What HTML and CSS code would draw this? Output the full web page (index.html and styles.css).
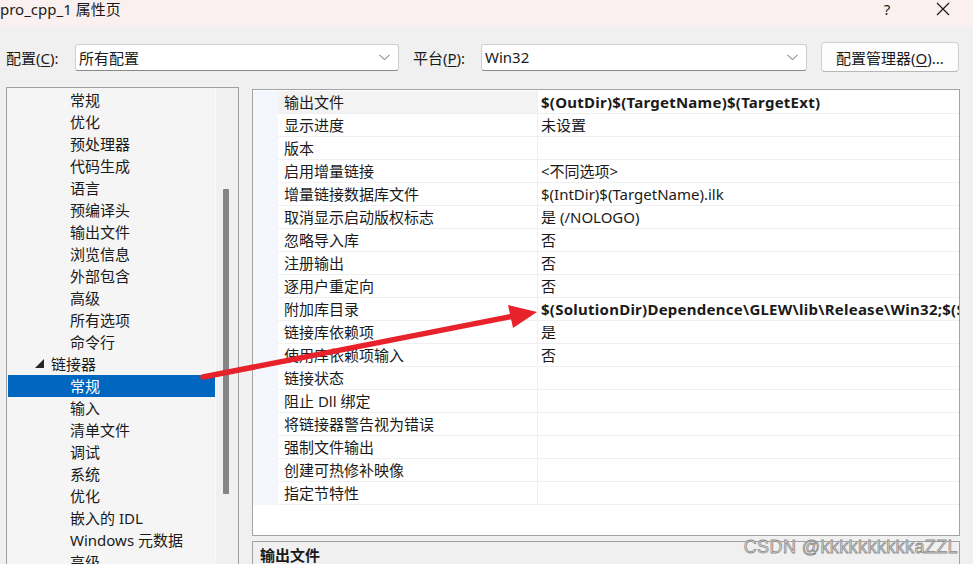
FILE: index.html
```html
<!DOCTYPE html>
<html lang="zh-CN">

<head>
    <meta charset="UTF-8">
    <meta name="viewport" content="width=device-width, initial-scale=1.0">
    <title>pro_cpp_1 属性页</title>
    <link rel="stylesheet" href="styles.css">
</head>

<body>

    <div class="titlebar">
        <span class="title">pro_cpp_1 属性页</span>
        <span class="title-btn help">?</span>
        <span class="title-btn close">
            <svg width="14" height="14" viewBox="0 0 14 14"><path d="M1 1L13 13M13 1L1 13" stroke="#1a1a1a" stroke-width="1.2"/></svg>
        </span>
    </div>

    <div class="toolbar">
        <span class="field-label">配置(<u>C</u>):</span>
        <div class="select config-select">
            <span>所有配置</span>
            <svg class="chevron" width="11" height="7" viewBox="0 0 11 7"><path d="M0.5 0.8L5.5 5.8L10.5 0.8" fill="none" stroke="#606060" stroke-width="1"/></svg>
        </div>
        <span class="field-label platform-label">平台(<u>P</u>):</span>
        <div class="select platform-select">
            <span>Win32</span>
            <svg class="chevron" width="11" height="7" viewBox="0 0 11 7"><path d="M0.5 0.8L5.5 5.8L10.5 0.8" fill="none" stroke="#606060" stroke-width="1"/></svg>
        </div>
        <button class="btn">配置管理器(<u>O</u>)...</button>
    </div>

    <div class="main">
        <div class="tree-panel">
            <div class="tree">
                <div class="tree-item">常规</div>
                <div class="tree-item">优化</div>
                <div class="tree-item">预处理器</div>
                <div class="tree-item">代码生成</div>
                <div class="tree-item">语言</div>
                <div class="tree-item">预编译头</div>
                <div class="tree-item">输出文件</div>
                <div class="tree-item">浏览信息</div>
                <div class="tree-item">外部包含</div>
                <div class="tree-item">高级</div>
                <div class="tree-item">所有选项</div>
                <div class="tree-item">命令行</div>
                <div class="tree-item tree-group">
                    <svg class="expander" width="9" height="9" viewBox="0 0 9 9"><path d="M9 0L9 9L0 9Z" fill="#262626"/></svg>
                    <span>链接器</span>
                </div>
                <div class="tree-item selected">常规</div>
                <div class="tree-item">输入</div>
                <div class="tree-item">清单文件</div>
                <div class="tree-item">调试</div>
                <div class="tree-item">系统</div>
                <div class="tree-item">优化</div>
                <div class="tree-item">嵌入的 IDL</div>
                <div class="tree-item">Windows 元数据</div>
                <div class="tree-item">高级</div>
            </div>
            <div class="scrollbar">
                <div class="thumb"></div>
            </div>
        </div>

        <div class="right-col">
            <div class="grid-panel">
                <div class="prop-row current">
                    <div class="gutter"></div>
                    <div class="prop-name">输出文件</div>
                    <div class="prop-value bold">$(OutDir)$(TargetName)$(TargetExt)</div>
                </div>
                <div class="prop-row">
                    <div class="gutter"></div>
                    <div class="prop-name">显示进度</div>
                    <div class="prop-value">未设置</div>
                </div>
                <div class="prop-row">
                    <div class="gutter"></div>
                    <div class="prop-name">版本</div>
                    <div class="prop-value"></div>
                </div>
                <div class="prop-row">
                    <div class="gutter"></div>
                    <div class="prop-name">启用增量链接</div>
                    <div class="prop-value">&lt;不同选项&gt;</div>
                </div>
                <div class="prop-row">
                    <div class="gutter"></div>
                    <div class="prop-name">增量链接数据库文件</div>
                    <div class="prop-value">$(IntDir)$(TargetName).ilk</div>
                </div>
                <div class="prop-row">
                    <div class="gutter"></div>
                    <div class="prop-name">取消显示启动版权标志</div>
                    <div class="prop-value">是 (/NOLOGO)</div>
                </div>
                <div class="prop-row">
                    <div class="gutter"></div>
                    <div class="prop-name">忽略导入库</div>
                    <div class="prop-value">否</div>
                </div>
                <div class="prop-row">
                    <div class="gutter"></div>
                    <div class="prop-name">注册输出</div>
                    <div class="prop-value">否</div>
                </div>
                <div class="prop-row">
                    <div class="gutter"></div>
                    <div class="prop-name">逐用户重定向</div>
                    <div class="prop-value">否</div>
                </div>
                <div class="prop-row">
                    <div class="gutter"></div>
                    <div class="prop-name">附加库目录</div>
                    <div class="prop-value bold">$(SolutionDir)Dependence\GLEW\lib\Release\Win32;$(SolutionDir)Dependence\GLFW\lib</div>
                </div>
                <div class="prop-row">
                    <div class="gutter"></div>
                    <div class="prop-name">链接库依赖项</div>
                    <div class="prop-value">是</div>
                </div>
                <div class="prop-row">
                    <div class="gutter"></div>
                    <div class="prop-name">使用库依赖项输入</div>
                    <div class="prop-value">否</div>
                </div>
                <div class="prop-row">
                    <div class="gutter"></div>
                    <div class="prop-name">链接状态</div>
                    <div class="prop-value"></div>
                </div>
                <div class="prop-row">
                    <div class="gutter"></div>
                    <div class="prop-name">阻止 Dll 绑定</div>
                    <div class="prop-value"></div>
                </div>
                <div class="prop-row">
                    <div class="gutter"></div>
                    <div class="prop-name">将链接器警告视为错误</div>
                    <div class="prop-value"></div>
                </div>
                <div class="prop-row">
                    <div class="gutter"></div>
                    <div class="prop-name">强制文件输出</div>
                    <div class="prop-value"></div>
                </div>
                <div class="prop-row">
                    <div class="gutter"></div>
                    <div class="prop-name">创建可热修补映像</div>
                    <div class="prop-value"></div>
                </div>
                <div class="prop-row">
                    <div class="gutter"></div>
                    <div class="prop-name">指定节特性</div>
                    <div class="prop-value"></div>
                </div>
            </div>
            <div class="desc-panel">
                <div class="desc-title">输出文件</div>
            </div>
        </div>
    </div>

    <div class="watermark">CSDN @kkkkkkkkkkaZZL</div>

    <svg class="annotation" width="973" height="564" viewBox="0 0 973 564">
        <line x1="203" y1="377" x2="514" y2="316" stroke="#e8222b" stroke-width="5.5" stroke-linecap="round"/>
        <polygon points="537,312 508,305 513,328" fill="#e8222b"/>
    </svg>

</body>

</html>
```

FILE: styles.css
```css
body {
    font-family: "Noto Sans", "Noto Sans CJK SC", sans-serif;
    font-size: 15px;
    color: #1a1a1a;
    background-color: #f0f0f0;
    margin: 0;
    padding: 0;
    width: 973px;
    height: 564px;
    overflow: hidden;
    position: relative;
}

u {
    text-underline-offset: 2px;
}

/* title bar */
.titlebar {
    height: 26px;
    padding-top: 1px;
    background-color: #f9f0ef;
    display: flex;
    align-items: flex-start;
    line-height: 16px;
}

.title {
    flex: 1;
}

.title-btn {
    height: 16px;
    display: flex;
    align-items: center;
    justify-content: center;
}

.help {
    width: 14px;
    margin-right: 42px;
    font-size: 15px;
}

.close {
    width: 14px;
    margin-right: 23px;
}

/* config row */
.toolbar {
    height: 60px;
    display: flex;
    align-items: center;
    padding-left: 6px;
}

.field-label {
    width: 69px;
}

.platform-label {
    width: 68px;
    margin-left: 14px;
}

.select {
    height: 25px;
    background-color: #fff;
    border: 1px solid #cfcfcf;
    border-bottom-color: #8a8a8a;
    border-radius: 3px;
    display: flex;
    align-items: center;
    justify-content: space-between;
    padding: 0 8px 0 3px;
    box-sizing: content-box;
}

.config-select {
    width: 311px;
}

.platform-select {
    width: 313px;
}

.btn {
    font-family: inherit;
    font-size: 15px;
    color: #1a1a1a;
    margin-left: 14px;
    width: 138px;
    height: 30px;
    background-color: #fdfdfd;
    border: 1px solid #d0d0d0;
    border-bottom-color: #b8b8b8;
    border-radius: 4px;
    padding: 0;
}

/* main area */
.main {
    display: flex;
    padding-left: 6px;
    gap: 13px;
}

.tree-panel {
    width: 231px;
    height: 480px;
    border: 1px solid #9f9f9f;
    background-color: #f5f5f5;
    display: flex;
    overflow: hidden;
}

.tree {
    width: 208px;
    padding: 1px 0 0 1px;
}

.tree-item {
    height: 22px;
    line-height: 22px;
    padding-left: 62px;
    white-space: nowrap;
    display: flex;
    align-items: center;
}

.tree-group {
    padding-left: 27px;
}

.expander {
    margin-right: 7px;
    margin-top: -2px;
}

.tree-item.selected {
    background-color: #0067c0;
    color: #fff;
}

.scrollbar {
    width: 22px;
    border-left: 1px solid #fafafa;
    background-color: #f0f0f0;
}

.thumb {
    width: 6px;
    height: 305px;
    margin-top: 101px;
    margin-left: 7px;
    background-color: #858585;
    border-radius: 1px;
}

.right-col {
    width: 708px;
    margin-top: 2px;
    display: flex;
    flex-direction: column;
    gap: 5px;
}

.grid-panel {
    height: 444px;
    border: 1px solid #a3a3a3;
    background-color: #fff;
    padding-top: 1px;
}

.prop-row {
    display: grid;
    grid-template-columns: 25px 259px 422px;
    height: 23px;
}

.gutter {
    background-color: #f3f6fc;
}

.prop-name,
.prop-value {
    line-height: 22px;
    border-bottom: 1px solid #f0f0f0;
    white-space: nowrap;
    overflow: hidden;
}

.prop-name {
    padding-left: 6px;
}

.prop-value {
    padding-left: 3px;
    border-left: 1px solid #f0f0f0;
}

.prop-row.current .prop-name {
    background-color: #f3f3f3;
}

.bold {
    font-weight: bold;
    letter-spacing: 0.25px;
}

.desc-panel {
    height: 22px;
    border: 1px solid #a3a3a3;
    border-bottom: none;
    background-color: #f0f0f0;
}

.desc-title {
    font-weight: bold;
    padding: 3px 0 0 7px;
    line-height: 20px;
}

/* overlays */
.watermark {
    position: absolute;
    right: 15px;
    bottom: 6px;
    font-family: "Liberation Sans", sans-serif;
    font-size: 18px;
    color: #e6e6e6;
    -webkit-text-stroke: 0.8px #8c8c8c;
    letter-spacing: 0.4px;
}

.annotation {
    position: absolute;
    left: 0;
    top: 0;
    pointer-events: none;
}
```
